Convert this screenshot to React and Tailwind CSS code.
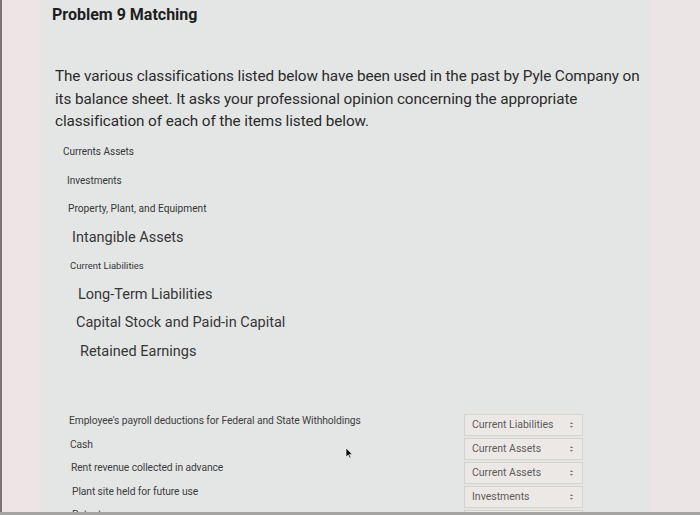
import React from 'react';

const categories = [
  { label: 'Currents Assets', size: 'text-[10px]', indent: 'ml-[11px]' },
  { label: 'Investments', size: 'text-[10px]', indent: 'ml-[15px]' },
  { label: 'Property, Plant, and Equipment', size: 'text-[10.2px]', indent: 'ml-[16px]' },
  { label: 'Intangible Assets', size: 'text-[14.5px]', indent: 'ml-[20px]' },
  { label: 'Current Liabilities', size: 'text-[9.5px]', indent: 'ml-[18px]' },
  { label: 'Long-Term Liabilities', size: 'text-[14.5px]', indent: 'ml-[26px]' },
  { label: 'Capital Stock and Paid-in Capital', size: 'text-[14.5px]', indent: 'ml-[24px]' },
  { label: 'Retained Earnings', size: 'text-[14.5px]', indent: 'ml-[28px]' },
];

const items = [
  { label: "Employee's payroll deductions for Federal and State Withholdings", answer: 'Current Liabilities', indent: 'ml-[17px]' },
  { label: 'Cash', answer: 'Current Assets', indent: 'ml-[18px]' },
  { label: 'Rent revenue collected in advance', answer: 'Current Assets', indent: 'ml-[19px]' },
  { label: 'Plant site held for future use', answer: 'Investments', indent: 'ml-[20px]' },
  { label: 'Patents', answer: '', indent: 'ml-[20px]' },
];

const Chevrons = () => (
  <svg width="5" height="8" viewBox="0 0 5 8" className="text-[#777]">
    <path d="M0.8 3 L2.5 1.2 L4.2 3 Z" fill="currentColor" />
    <path d="M0.8 5 L2.5 6.8 L4.2 5 Z" fill="currentColor" />
  </svg>
);

const Cursor = () => (
  <svg width="8" height="12" viewBox="0 0 8 12" className="absolute left-[345px] top-[447px]">
    <path d="M1 1 L1 10 L3.2 8 L4.8 11.2 L6 10.6 L4.5 7.5 L7.4 7.4 Z" fill="#111" stroke="#fff" strokeWidth="0.6" />
  </svg>
);

export default function App() {
  return (
    <div className="relative flex h-[515px] w-[700px] flex-col overflow-hidden bg-[#ece5e5] font-['Roboto',sans-serif]">
      <div className="flex h-[512px] overflow-hidden">
        <div className="w-[2px] bg-[#7b7474]" />
        <div className="w-[38px] bg-[#ede5e5]" />

        <div className="w-[610px] bg-[#e4e6e6] pl-[12px]">
          <h1 className="mt-[4px] text-[16px] font-bold leading-[21px] text-[#1e1e1e]">Problem 9 Matching</h1>

          <p className="mt-[40px] ml-[3px] whitespace-nowrap text-[15.3px] leading-[22.5px] tracking-[-0.1px] text-[#2b2b2b]">
            The various classifications listed below have been used in the past by Pyle Company on
            <br />
            its balance sheet. It asks your professional opinion concerning the appropriate
            <br />
            classification of each of the items listed below.
          </p>

          <ul className="mt-[5px]">
            {categories.map((c) => (
              <li key={c.label} className={`flex h-[28.6px] items-center ${c.indent} ${c.size} text-[#363636]`}>
                {c.label}
              </li>
            ))}
          </ul>

          <div className="mt-[43px] flex">
            <div className="w-[412px]">
              {items.map((it) => (
                <div key={it.label} className={`flex h-[23.5px] items-center ${it.indent} text-[10.3px] tracking-[-0.1px] text-[#3d3d3d]`}>
                  {it.label}
                </div>
              ))}
            </div>
            <div className="mt-[5px] flex flex-col gap-[2px]">
              {items.map((it, i) => (
                <div
                  key={i}
                  className="flex h-[22px] w-[119px] items-center justify-between border border-[#d6d3d1] bg-[#ece8e6] pl-[7px] pr-[8px] text-[10.5px] text-[#5c5c5c]"
                >
                  <span>{it.answer}</span>
                  <Chevrons />
                </div>
              ))}
            </div>
          </div>
        </div>

        <div className="flex-1 bg-[#ebe5e5]" />
      </div>
      <div className="h-[3px] bg-[#a6a3a3]" />
      <Cursor />
    </div>
  );
}
